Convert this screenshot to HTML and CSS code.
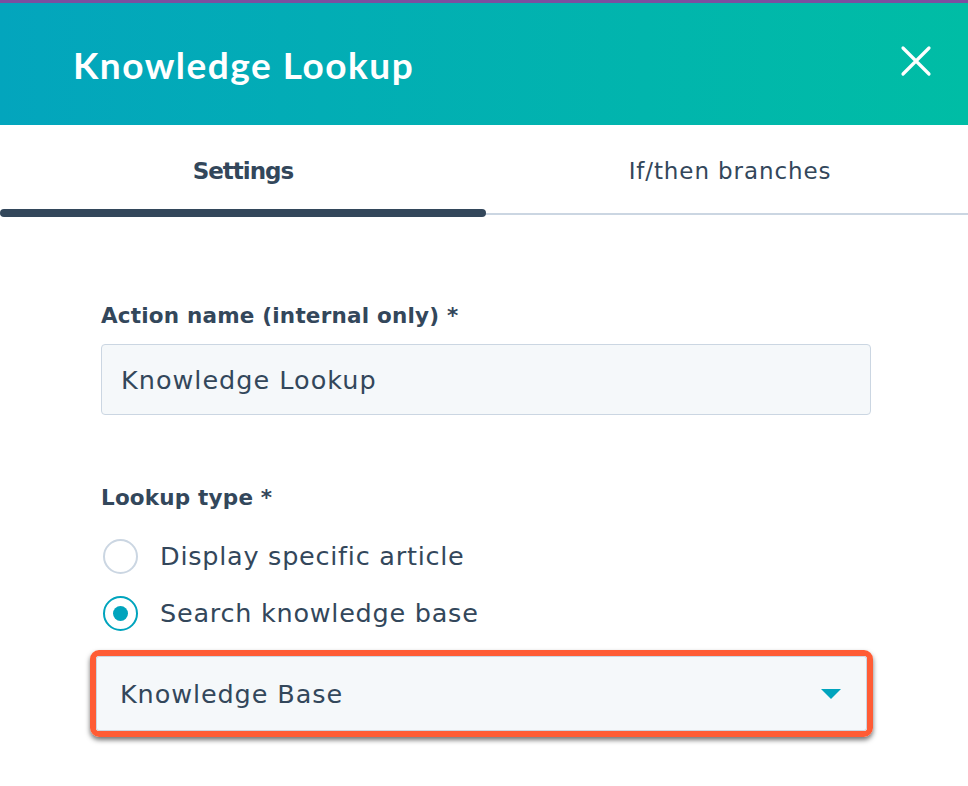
FILE: index.html
```html
<!DOCTYPE html>
<html>
<head>
<meta charset="utf-8">
<link rel="stylesheet" href="styles.css">
</head>
<body>
<div class="panel">
  <header class="header">
    <h1 class="title">Knowledge Lookup</h1>
    <button class="close" aria-label="Close">
      <svg width="32" height="32" viewBox="0 0 32 32"><path d="M3 3 L29 29 M29 3 L3 29" stroke="#fff" stroke-width="3.2" stroke-linecap="round"/></svg>
    </button>
  </header>
  <nav class="tabs">
    <div class="tab active">Settings</div>
    <div class="tab">If/then branches</div>
  </nav>
  <main class="content">
    <div class="field">
      <label class="label">Action name (internal only) *</label>
      <div class="input">Knowledge Lookup</div>
    </div>
    <div class="field field-lookup">
      <label class="label">Lookup type *</label>
      <div class="radios">
        <div class="radio-row"><span class="radio"></span><span>Display specific article</span></div>
        <div class="radio-row"><span class="radio checked"></span><span>Search knowledge base</span></div>
      </div>
      <div class="highlight">
        <div class="select">
          <span>Knowledge Base</span>
          <span class="caret"></span>
        </div>
      </div>
    </div>
  </main>
</div>
</body>
</html>
```

FILE: styles.css
```css
* { box-sizing: border-box; }
html, body { margin: 0; padding: 0; background: #fff; }
body { font-family: "DejaVu Sans", "Open Sans", sans-serif; color: #33475b; }

.panel { width: 968px; height: 786px; overflow: hidden; }

.header {
  height: 125px;
  border-top: 3px solid #7b4fa0;
  background: linear-gradient(90deg, #03a5bd 0%, #00bda5 100%);
  display: flex;
  align-items: center;
  justify-content: space-between;
  padding: 0 36px 0 73px;
}
.title {
  margin: 0;
  color: #fff;
  font-family: "Lato", sans-serif;
  font-weight: 700;
  font-size: 37px;
  letter-spacing: 1.5px;
}
.close {
  background: none; border: 0; padding: 0; margin-top: -6px;
  display: flex;
}

.tabs {
  display: flex;
  height: 90px;
  border-bottom: 2px solid #cbd6e2;
}
.tab {
  flex: 0 0 486px;
  display: flex;
  align-items: center;
  justify-content: center;
  font-size: 23px;
  letter-spacing: 0.9px;
  padding-top: 3px;
  color: #33475b;
}
.tab + .tab { flex: 1; padding-left: 6px; }
.tab.active { font-weight: 700; position: relative; letter-spacing: -1px; }
.tab.active::after {
  content: "";
  position: absolute;
  left: 0; right: 0; bottom: -4px;
  height: 8px;
  background: #33475b;
  border-radius: 4px;
}

.content { padding: 87px 97px 0 101px; }

.field { display: flex; flex-direction: column; }
.label { font-weight: 700; font-size: 21.5px; letter-spacing: 0.2px; line-height: 28px; margin-bottom: 14px; }
.input {
  height: 71px;
  background: #f5f8fa;
  border: 1px solid #cbd6e2;
  border-radius: 4px;
  display: flex;
  align-items: center;
  padding: 0 19px;
  font-size: 25.5px;
  letter-spacing: 1px;
}
.field-lookup { margin-top: 69px; }
.field-lookup .label { margin-bottom: 27px; }

.radios { display: flex; flex-direction: column; gap: 22px; padding-left: 2px; }
.radio-row { display: flex; align-items: center; gap: 22px; font-size: 25.5px; letter-spacing: 0.75px; line-height: 35px; }
.radio {
  width: 35px; height: 35px;
  border: 2px solid #cbd6e2;
  border-radius: 50%;
  background: #fff;
  flex: none;
  display: flex; align-items: center; justify-content: center;
}
.radio.checked { border-color: #00a4bd; }
.radio.checked::after {
  content: ""; width: 15px; height: 15px; border-radius: 50%; background: #00a4bd;
}

.highlight {
  margin: 19px 0 0 -11px;
  width: 783px;
  border: 6px solid #ff5c35;
  border-radius: 9px;
  box-shadow: 0 3px 5px rgba(0,0,0,0.55);
}
.select {
  height: 75px;
  background: #f5f8fa;
  border: 1px solid #cbd6e2;
  border-radius: 3px;
  display: flex;
  align-items: center;
  justify-content: space-between;
  padding: 0 25px 0 23px;
  font-size: 25.5px;
  letter-spacing: 0.9px;
}
.caret {
  width: 0; height: 0;
  border-left: 10px solid transparent;
  border-right: 10px solid transparent;
  border-top: 10px solid #00a4bd;
}
```
